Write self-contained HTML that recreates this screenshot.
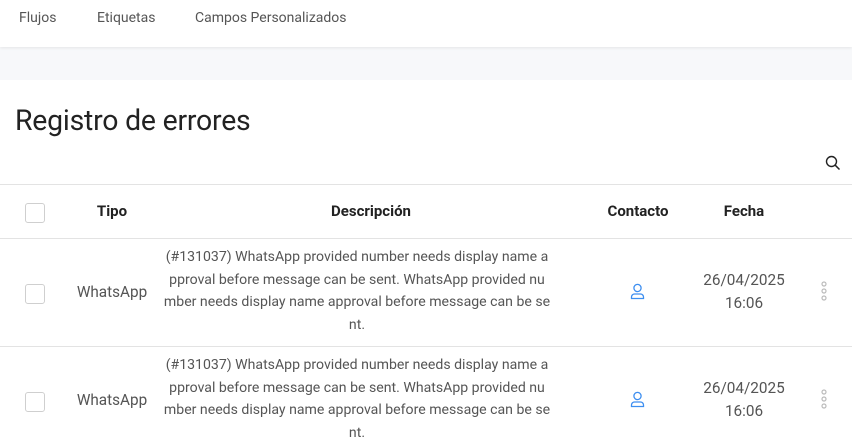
<!DOCTYPE html>
<html><head><meta charset="utf-8"><style>
*{margin:0;padding:0;box-sizing:border-box}
body{width:852px;height:433px;overflow:hidden;background:#fff;font-family:"Roboto","Liberation Sans",sans-serif;color:#555;position:relative}
.nav{position:absolute;left:0;top:0;width:852px;height:47px;background:#fff;box-shadow:0 1px 3px rgba(0,0,0,.08);z-index:2}
.nav span{position:absolute;top:9px;font-size:14px;color:#555}
.band{position:absolute;left:0;top:47px;width:852px;height:33px;background:#f7f8fa}
h1{position:absolute;left:15px;top:104px;font-size:28.4px;font-weight:400;color:#222;letter-spacing:-0.2px}
.hl{position:absolute;left:0;width:852px;height:1px;background:#e3e3e3}
.cb{position:absolute;left:25px;width:20px;height:20px;border:1px solid #cfcfcf;border-radius:3px;background:#fff}
.th{position:absolute;font-size:15px;font-weight:bold;color:#222;transform:translateX(-50%);white-space:nowrap}
.c{position:absolute;transform:translateX(-50%);text-align:center;white-space:nowrap;font-size:15.3px;color:#555}
.desc{line-height:22.7px;font-size:14.1px}
.date{line-height:23px}
</style></head><body>
<div class="nav"><span style="left:19px;top:10px">Flujos</span><span style="left:97px;top:10px">Etiquetas</span><span style="left:195px;top:10px">Campos Personalizados</span></div>
<div class="band"></div>
<h1>Registro de errores</h1>
<svg style="position:absolute;left:825px;top:155px" width="16" height="16" viewBox="0 0 16 16"><circle cx="6.5" cy="6.5" r="5" fill="none" stroke="#222" stroke-width="1.4"/><path d="M10.2 10.2L14.5 14.5" stroke="#222" stroke-width="1.5"/></svg>
<div class="hl" style="top:184px"></div>
<div class="cb" style="top:203px"></div>
<div class="th" style="left:112px;top:202px">Tipo</div>
<div class="th" style="left:371px;top:202px">Descripción</div>
<div class="th" style="left:638px;top:202px">Contacto</div>
<div class="th" style="left:744px;top:202px">Fecha</div>
<div class="hl" style="top:238px"></div>

<div class="cb" style="top:284px"></div>
<div class="c" style="left:112px;top:283px">WhatsApp</div>
<div class="c desc" style="left:357px;top:246px">(#131037) WhatsApp provided number needs display name a<br>pproval before message can be sent. WhatsApp provided nu<br>mber needs display name approval before message can be se<br>nt.</div>
<svg style="position:absolute;left:630px;top:283px" width="15" height="17" viewBox="0 0 15 17"><circle cx="7.5" cy="5" r="3.6" fill="none" stroke="#3d8ef0" stroke-width="1.3"/><path d="M1.5 15.5v-1.5a3 3 0 0 1 3-3h6a3 3 0 0 1 3 3v1.5z" fill="none" stroke="#3d8ef0" stroke-width="1.3"/></svg>
<div class="c date" style="left:744px;top:269px">26/04/2025<br>16:06</div>
<svg style="position:absolute;left:820px;top:281px" width="8" height="20" viewBox="0 0 8 20"><circle cx="4" cy="3" r="2" fill="none" stroke="#bbb" stroke-width="1.2"/><circle cx="4" cy="10" r="2" fill="none" stroke="#bbb" stroke-width="1.2"/><circle cx="4" cy="17" r="2" fill="none" stroke="#bbb" stroke-width="1.2"/></svg>
<div class="hl" style="top:346px"></div>

<div class="cb" style="top:392px"></div>
<div class="c" style="left:112px;top:391px">WhatsApp</div>
<div class="c desc" style="left:357px;top:354px">(#131037) WhatsApp provided number needs display name a<br>pproval before message can be sent. WhatsApp provided nu<br>mber needs display name approval before message can be se<br>nt.</div>
<svg style="position:absolute;left:630px;top:391px" width="15" height="17" viewBox="0 0 15 17"><circle cx="7.5" cy="5" r="3.6" fill="none" stroke="#3d8ef0" stroke-width="1.3"/><path d="M1.5 15.5v-1.5a3 3 0 0 1 3-3h6a3 3 0 0 1 3 3v1.5z" fill="none" stroke="#3d8ef0" stroke-width="1.3"/></svg>
<div class="c date" style="left:744px;top:377px">26/04/2025<br>16:06</div>
<svg style="position:absolute;left:820px;top:389px" width="8" height="20" viewBox="0 0 8 20"><circle cx="4" cy="3" r="2" fill="none" stroke="#bbb" stroke-width="1.2"/><circle cx="4" cy="10" r="2" fill="none" stroke="#bbb" stroke-width="1.2"/><circle cx="4" cy="17" r="2" fill="none" stroke="#bbb" stroke-width="1.2"/></svg>
</body></html>
